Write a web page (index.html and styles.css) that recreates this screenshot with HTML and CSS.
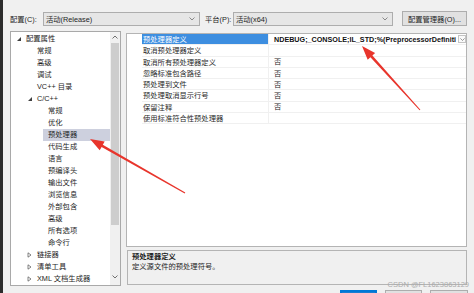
FILE: index.html
```html
<!DOCTYPE html>
<html lang="zh-CN">
<head>
  <meta charset="UTF-8">
  <title>属性页</title>
  <link rel="stylesheet" href="styles.css">
</head>
<body>
  <div class="dialog">
    <div class="toolbar">
      <span class="tb-label cfg-label">配置(C):</span>
      <div class="combo combo-cfg">
        <span class="combo-text">活动(Release)</span>
        <svg class="chev" width="6" height="4" viewBox="0 0 6 4"><polyline points="0.5,0.5 3,3 5.5,0.5" fill="none" stroke="#707070" stroke-width="0.8"/></svg>
      </div>
      <span class="tb-label plat-label">平台(P):</span>
      <div class="combo combo-plat">
        <span class="combo-text">活动(x64)</span>
        <svg class="chev" width="6" height="4" viewBox="0 0 6 4"><polyline points="0.5,0.5 3,3 5.5,0.5" fill="none" stroke="#707070" stroke-width="0.8"/></svg>
      </div>
      <button class="btn cfg-manager">配置管理器(O)...</button>
    </div>

    <div class="main">
      <div class="tree">
        <div class="tree-list">
          <div class="node pad-15"><span class="tg"><svg width="6" height="6" viewBox="0 0 6 6"><polygon points="2,5 6,5 6,1" fill="#404040"/></svg></span><span class="txt">配置属性</span></div>
          <div class="node pad-32"><span class="txt">常规</span></div>
          <div class="node pad-32"><span class="txt">高级</span></div>
          <div class="node pad-32"><span class="txt">调试</span></div>
          <div class="node pad-32"><span class="txt">VC++ 目录</span></div>
          <div class="node pad-26"><span class="tg"><svg width="6" height="6" viewBox="0 0 6 6"><polygon points="2,5 6,5 6,1" fill="#404040"/></svg></span><span class="txt">C/C++</span></div>
          <div class="node pad-43"><span class="txt">常规</span></div>
          <div class="node pad-43"><span class="txt">优化</span></div>
          <div class="node pad-43 selected"><span class="txt">预处理器</span></div>
          <div class="node pad-43"><span class="txt">代码生成</span></div>
          <div class="node pad-43"><span class="txt">语言</span></div>
          <div class="node pad-43"><span class="txt">预编译头</span></div>
          <div class="node pad-43"><span class="txt">输出文件</span></div>
          <div class="node pad-43"><span class="txt">浏览信息</span></div>
          <div class="node pad-43"><span class="txt">外部包含</span></div>
          <div class="node pad-43"><span class="txt">高级</span></div>
          <div class="node pad-43"><span class="txt">所有选项</span></div>
          <div class="node pad-43"><span class="txt">命令行</span></div>
          <div class="node pad-26"><span class="tg"><svg width="6" height="6" viewBox="0 0 6 6"><polygon points="2,0.8 5,3 2,5.2" fill="none" stroke="#505050" stroke-width="0.7"/></svg></span><span class="txt">链接器</span></div>
          <div class="node pad-26"><span class="tg"><svg width="6" height="6" viewBox="0 0 6 6"><polygon points="2,0.8 5,3 2,5.2" fill="none" stroke="#505050" stroke-width="0.7"/></svg></span><span class="txt">清单工具</span></div>
          <div class="node pad-26"><span class="tg"><svg width="6" height="6" viewBox="0 0 6 6"><polygon points="2,0.8 5,3 2,5.2" fill="none" stroke="#505050" stroke-width="0.7"/></svg></span><span class="txt">XML 文档生成器</span></div>
        </div>
        <div class="vscroll">
          <div class="sb-arrow"><svg width="6" height="4" viewBox="0 0 6 4"><polyline points="0.5,3.5 3,1 5.5,3.5" fill="none" stroke="#606060" stroke-width="0.9"/></svg></div>
          <div class="sb-thumb"></div>
          <div class="sb-space"></div>
          <div class="sb-arrow sb-down"><svg width="6" height="4" viewBox="0 0 6 4"><polyline points="0.5,0.5 3,3 5.5,0.5" fill="none" stroke="#606060" stroke-width="0.9"/></svg></div>
        </div>
      </div>

      <div class="right">
        <div class="grid">
          <div class="row active">
            <div class="name">预处理器定义</div>
            <div class="value bold"><span class="value-text">NDEBUG;_CONSOLE;IL_STD;%(PreprocessorDefiniti</span>
              <span class="drop"><svg width="5" height="3" viewBox="0 0 5 3"><polyline points="0.4,0.4 2.5,2.5 4.6,0.4" fill="none" stroke="#707070" stroke-width="0.7"/></svg></span>
            </div>
          </div>
          <div class="row"><div class="name">取消预处理器定义</div><div class="value"></div></div>
          <div class="row"><div class="name">取消所有预处理器定义</div><div class="value">否</div></div>
          <div class="row"><div class="name">忽略标准包含路径</div><div class="value">否</div></div>
          <div class="row"><div class="name">预处理到文件</div><div class="value">否</div></div>
          <div class="row"><div class="name">预处理取消显示行号</div><div class="value">否</div></div>
          <div class="row"><div class="name">保留注释</div><div class="value">否</div></div>
          <div class="row"><div class="name">使用标准符合性预处理器</div><div class="value"></div></div>
        </div>
        <div class="desc">
          <div class="desc-title">预处理器定义</div>
          <div class="desc-text">定义源文件的预处理符号。</div>
        </div>
      </div>
    </div>

    <div class="buttons">
      <button class="btn btn-primary"></button>
      <button class="btn btn-small"></button>
      <button class="btn btn-small btn-last"></button>
    </div>
  </div>

  <div class="watermark">CSDN @FL1623863129</div>

  <!-- red annotation arrows drawn over the screenshot -->
  <svg class="marks" width="474" height="293" viewBox="0 0 474 293">
    <polygon fill="#e8352c" points="90,139 104.7,141.5 102.8,144.8 185.3,192.6 184.7,193.4 101.6,147 99.7,150.3"/>
    <polygon fill="#e8352c" points="362,46 375.1,53 372.4,55.5 420.4,109.7 419.6,110.3 370.4,57.3 367.7,59.8"/>
  </svg>
</body>
</html>
```

FILE: styles.css
```css
body {
  margin: 0;
  width: 474px;
  height: 293px;
  overflow: hidden;
  position: relative;
  background-color: #f0f0f0;
  font-family: "Liberation Sans", "Noto Sans CJK SC", sans-serif;
  font-size: 7.3px;
  color: #1e1e1e;
}

.dialog {
  height: 293px;
  box-sizing: border-box;
  overflow: hidden;
  border-left: 3px solid #2c2c2c;
  padding-left: 7px;
}

/* top row: configuration / platform */
.toolbar {
  display: flex;
  align-items: center;
  height: 15px;
  padding-top: 11px;
}

.tb-label {
  white-space: nowrap;
}

.cfg-label {
  width: 33px;
}

.plat-label {
  width: 28px;
  margin-left: 5px;
}

.combo {
  display: flex;
  align-items: center;
  justify-content: space-between;
  height: 14px;
  box-sizing: border-box;
  border: 1px solid #adadad;
  background-color: #e6e6e6;
  padding: 0 4px 0 2px;
}

.combo-cfg {
  width: 157px;
}

.combo-plat {
  width: 160px;
}

.btn {
  font-family: inherit;
  font-size: 7.3px;
  color: #1e1e1e;
  background-color: #e1e1e1;
  border: 1px solid #adadad;
  padding: 0;
  margin: 0;
}

.cfg-manager {
  width: 65px;
  height: 15px;
  margin-left: 9px;
}

/* left tree */
.main {
  display: flex;
  margin-top: 5px;
}

.tree {
  display: flex;
  width: 111px;
  height: 255px;
  box-sizing: border-box;
  border: 1px solid #a9a9a9;
  background-color: white;
}

.tree-list {
  width: 99px;
  padding-top: 1px;
  overflow: hidden;
}

.node {
  display: flex;
  align-items: center;
  height: 12px;
  white-space: nowrap;
}

.pad-15 { padding-left: 4px; }
.pad-26 { padding-left: 15px; }
.pad-32 { padding-left: 21px; }
.pad-43 { padding-left: 32px; }

.tg {
  display: flex;
  width: 6px;
  height: 6px;
}

.txt {
  flex: 1;
  height: 12px;
  line-height: 12px;
  padding-left: 5px;
}

.selected .txt {
  background-color: #cdd0de;
}

.vscroll {
  display: flex;
  flex-direction: column;
  width: 10px;
  background-color: #f0f0f0;
}

.sb-arrow {
  display: flex;
  align-items: center;
  justify-content: center;
  height: 10px;
}

.sb-thumb {
  height: 182px;
  margin: 1px 1px 0;
  background-color: #cdcdcd;
}

.sb-space {
  flex: 1;
}

.sb-down {
  margin-bottom: 3px;
}

/* property grid */
.right {
  display: flex;
  flex-direction: column;
  width: 341px;
  margin-left: 5px;
  padding-top: 2px;
}

.grid {
  height: 214px;
  box-sizing: border-box;
  border: 1px solid #b4b4b4;
  background-color: white;
  padding-left: 15px;
}

.row {
  display: flex;
  height: 11.3px;
  line-height: 11px;
  box-sizing: border-box;
  border-bottom: 1px solid #f0f0f0;
  color: #2a2a2a;
  white-space: nowrap;
}

.name {
  width: 125px;
  padding-left: 1px;
}

.row.active .name {
  background-color: #3d8ee0;
  color: white;
}

.value {
  display: flex;
  align-items: center;
  flex: 1;
  min-width: 0;
  padding-left: 5px;
  border-left: 1px solid #f0f0f0;
}

.value.bold {
  font-weight: bold;
  font-size: 7.2px;
  color: #111;
}

.value-text {
  flex: 1;
}

.drop {
  display: flex;
  align-items: center;
  justify-content: center;
  width: 8px;
  height: 8px;
  box-sizing: border-box;
  border: 1px solid #c4c4c4;
  background-color: #fafafa;
}

.desc {
  height: 35px;
  box-sizing: border-box;
  margin: 3px 0 0 1px;
  border: 1px solid #b4b4b4;
  padding: 1px 0 0 4px;
  line-height: 10px;
}

.desc-title {
  font-weight: bold;
}

/* bottom buttons, only their tops are visible */
.buttons {
  display: flex;
  justify-content: flex-end;
  margin-top: 4px;
  padding-right: 6px;
}

.btn-primary {
  width: 37px;
  height: 3px;
  border: 2px solid #0078d7;
  border-bottom: 0;
  background-color: #1a7fd2;
  margin-right: 8px;
}

.btn-small {
  width: 37px;
  height: 3px;
  border-bottom: 0;
  margin-right: 8px;
}

.btn-last {
  width: 38px;
  margin-right: 0;
}

.watermark {
  position: absolute;
  right: 5px;
  top: 280px;
  font-size: 7.5px;
  color: #ababab;
  white-space: nowrap;
}

.marks {
  position: absolute;
  top: 0;
  left: 0;
  pointer-events: none;
}
```
